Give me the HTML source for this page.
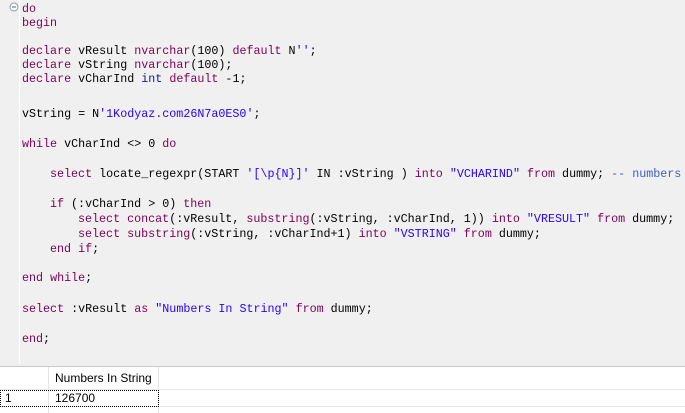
<!DOCTYPE html>
<html><head><meta charset="utf-8"><style>
body{margin:0;width:685px;height:412px;background:#f0f0f0;position:relative;overflow:hidden}
.ed{position:absolute;left:0;top:0;width:685px;height:366px;background:#f0f0f0}
.gut{position:absolute;left:19px;top:0;width:1px;height:363px;background:#fff}
.l{position:absolute;font-family:"Liberation Mono",monospace;font-size:11.7px;line-height:14px;color:#000;white-space:pre}
.k{color:#7f0055}
.s{color:#2a00ff}
.c{color:#3f5fbf}
.g{position:absolute;left:0;top:366px;width:685px;height:46px;background:#fff;border-top:1px solid #c8c8c8}
.t{position:absolute;font-family:"Liberation Sans",sans-serif;font-size:12px;color:#000}
</style></head><body>
<div class="ed">
<div class="gut"></div>
<svg style="position:absolute;left:9px;top:2px" width="10" height="10"><circle cx="5" cy="5" r="4" fill="#fff" stroke="#8a9aa8"/><line x1="3" y1="5" x2="7" y2="5" stroke="#56687a"/></svg>
<div class="l" style="left:22px;top:2px"><span class="k">do</span></div>
<div class="l" style="left:22px;top:16px"><span class="k">begin</span></div>
<div class="l" style="left:22px;top:44px"><span class="k">declare</span> vResult <span class="k">nvarchar</span>(100) <span class="k">default</span> N<span class="s">''</span>;</div>
<div class="l" style="left:22px;top:58px"><span class="k">declare</span> vString <span class="k">nvarchar</span>(100);</div>
<div class="l" style="left:22px;top:72px"><span class="k">declare</span> vCharInd <span class="k" style="color:#1a1a8a">int</span> <span class="k">default</span> -1;</div>
<div class="l" style="left:22px;top:107px">vString = N<span class="s">'1Kodyaz.com26N7a0ES0'</span>;</div>
<div class="l" style="left:22px;top:137px"><span class="k">while</span> vCharInd &lt;&gt; 0 <span class="k">do</span></div>
<div class="l" style="left:50px;top:167px"><span class="k">select</span> locate_regexpr(START <span class="s">'[\p{N}]'</span> IN :vString ) <span class="k">into</span> <span class="s">"VCHARIND"</span> <span class="k">from</span> dummy; <span class="c">-- numbers</span></div>
<div class="l" style="left:50px;top:197px"><span class="k">if</span> (:vCharInd &gt; 0) <span class="k">then</span></div>
<div class="l" style="left:78px;top:212px"><span class="k">select</span> <span class="k">concat</span>(:vResult, <span class="k">substring</span>(:vString, :vCharInd, 1)) <span class="k">into</span> <span class="s">"VRESULT"</span> <span class="k">from</span> dummy;</div>
<div class="l" style="left:78px;top:227px"><span class="k">select</span> <span class="k">substring</span>(:vString, :vCharInd+1) <span class="k">into</span> <span class="s">"VSTRING"</span> <span class="k">from</span> dummy;</div>
<div class="l" style="left:50px;top:242px"><span class="k">end</span> <span class="k">if</span>;</div>
<div class="l" style="left:22px;top:271px"><span class="k">end</span> <span class="k">while</span>;</div>
<div class="l" style="left:22px;top:302px"><span class="k">select</span> :vResult <span class="k">as</span> <span class="s">"Numbers In String"</span> <span class="k">from</span> dummy;</div>
<div class="l" style="left:22px;top:332px"><span class="k">end</span>;</div>
</div>
<div class="g">
<div style="position:absolute;left:48px;top:0;width:1px;height:46px;background:#e4e4e4"></div>
<div style="position:absolute;left:158px;top:0;width:1px;height:46px;background:#e4e4e4"></div>
<div style="position:absolute;left:0;top:22px;width:685px;height:1px;background:#e8e8e8"></div>
<div style="position:absolute;left:0;top:39px;width:685px;height:1px;background:#e8e8e8"></div>
<div class="t" style="left:55px;top:4px">Numbers In String</div>
<div style="position:absolute;left:0;top:23px;width:157px;height:15px;border:1px dotted #000"></div>
<div class="t" style="left:5px;top:24px">1</div>
<div class="t" style="left:55px;top:24px">126700</div>
</div>
</body></html>
